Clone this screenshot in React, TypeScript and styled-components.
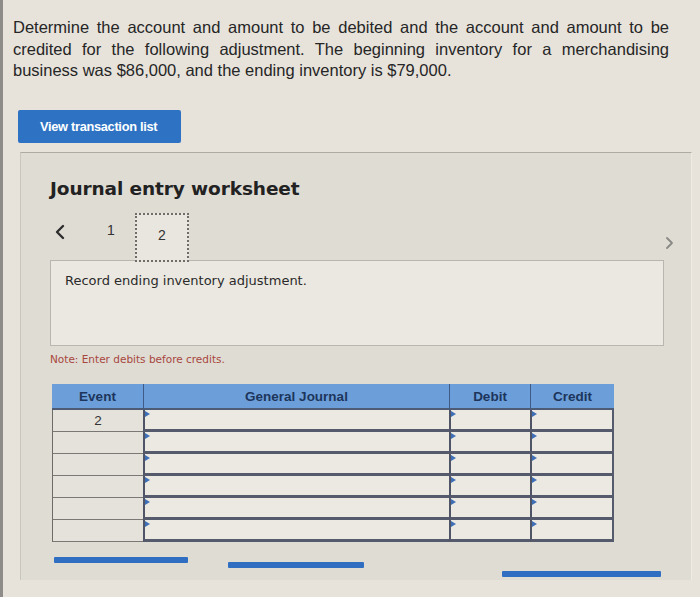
import React from "react";
import styled, { createGlobalStyle } from "styled-components";

const Global = createGlobalStyle`
  html, body { margin: 0; padding: 0; }
  body {
    background: #e7e3db;
    font-family: "Liberation Sans", Arial, sans-serif;
    color: #222;
    width: 700px;
    height: 597px;
    overflow: hidden;
  }
`;

const Page = styled.div`
  position: relative;
  width: 700px;
  height: 597px;
  border-left: 3px solid #8e8c88;
  box-sizing: border-box;
  padding-top: 17px;
`;

const Question = styled.div`
  margin-left: 10px;
  width: 656px;
  font-size: 16.5px;
  line-height: 21.5px;
  color: #262626;
`;

const Line = styled.span<{ $justify?: boolean }>`
  display: block;
  text-align: ${(p) => (p.$justify ? "justify" : "left")};
  text-align-last: ${(p) => (p.$justify ? "justify" : "left")};
`;

const ViewButton = styled.button`
  display: block;
  margin: 28px 0 0 15px;
  width: 163px;
  height: 33px;
  background: #2e73c3;
  border: none;
  border-radius: 2px;
  color: #fff;
  font-family: "Liberation Sans", Arial, sans-serif;
  font-weight: bold;
  font-size: 12.8px;
  letter-spacing: -0.3px;
  text-align: left;
  padding: 0 0 0 22px;
`;

const Panel = styled.section`
  margin: 9px 0 0 17px;
  width: 672px;
  height: 428px;
  background: #dfdcd4;
  border-top: 1px solid #aeaba4;
  border-left: 1px solid #c9c6bf;
  border-right: 1px solid #eeebe4;
  box-sizing: border-box;
  padding: 24px 0 0 29px;
  display: flex;
  flex-direction: column;
`;

const Title = styled.h2`
  margin: 0;
  font-family: "DejaVu Sans", Verdana, sans-serif;
  font-weight: bold;
  font-size: 18.5px;
  line-height: 24px;
  color: #222;
  letter-spacing: -0.1px;
`;

const TabsRow = styled.div`
  margin-top: 12px;
  width: 625px;
  height: 53px;
  display: flex;
  align-items: flex-start;
`;

const Chevron = styled.svg<{ $muted?: boolean }>`
  flex: none;
  stroke: ${(p) => (p.$muted ? "#8a8884" : "#2e2e2e")};
  fill: none;
  stroke-linecap: round;
  stroke-linejoin: round;
`;

const Prev = styled(Chevron)`
  margin: 11px 0 0 4px;
`;

const Next = styled(Chevron)`
  margin: 23px 0 0 auto;
`;

const Tab = styled.div<{ $active?: boolean }>`
  width: ${(p) => (p.$active ? "54px" : "40px")};
  height: ${(p) => (p.$active ? "49px" : "30px")};
  box-sizing: border-box;
  display: flex;
  align-items: center;
  justify-content: center;
  font-family: "Liberation Sans", Arial, sans-serif;
  font-size: 14px;
  color: #333;
  border: ${(p) => (p.$active ? "2px dotted #6f6d69" : "none")};
  background: ${(p) => (p.$active ? "#e9e6df" : "transparent")};
  position: relative;
  z-index: 1;
  margin-left: ${(p) => (p.$active ? "4px" : "25px")};
  padding-bottom: ${(p) => (p.$active ? "4px" : "0")};
  margin-top: ${(p) => (p.$active ? "0" : "2px")};
`;

const ContentBox = styled.div`
  width: 614px;
  height: 90px;
  box-sizing: border-box;
  margin-top: -2px;
  background: #ebe8e1;
  border: 1px solid #b9b6af;
  padding: 12px 14px;
  font-family: "DejaVu Sans", Verdana, sans-serif;
  font-size: 13px;
  color: #2a2a2a;
`;

const Note = styled.p`
  margin: 7px 0 0 0;
  font-family: "DejaVu Sans", Verdana, sans-serif;
  font-size: 10.5px;
  color: #a8473e;
`;

const Table = styled.div`
  margin: 19px 0 0 2px;
  width: 562px;
  display: grid;
  grid-template-columns: 91px 306px 81px 84px;
  grid-template-rows: 26px;
  grid-auto-rows: 22px;
`;

const Head = styled.div<{ $first?: boolean }>`
  background: #6c9fd9;
  display: flex;
  align-items: center;
  justify-content: center;
  font-weight: bold;
  font-size: 13.5px;
  color: #1d355c;
  border-left: ${(p) => (p.$first ? "none" : "1px solid #3f5c88")};
  border-bottom: 2px solid #4d5b74;
`;

const EventCell = styled.div`
  box-sizing: border-box;
  background: #e5e2db;
  border-left: 1px solid #6d6b68;
  border-bottom: 1px solid #7a7875;
  display: flex;
  align-items: center;
  justify-content: center;
  font-size: 13.5px;
  color: #333;
`;

const InputCell = styled.div<{ $right?: boolean }>`
  position: relative;
  box-sizing: border-box;
  background: #ece9e3;
  border-left: 2px solid #4f5466;
  border-bottom: 3px solid #555a6c;
  border-right: ${(p) => (p.$right ? "2px solid #555a6c" : "none")};
  &::before {
    content: "";
    position: absolute;
    left: 0;
    top: 1px;
    border-top: 3px solid transparent;
    border-bottom: 3px solid transparent;
    border-left: 5px solid #3e6fb6;
  }
`;

const Bars = styled.div`
  margin-top: 15px;
  display: flex;
  align-items: flex-start;
  height: 24px;
`;

const Bar = styled.div<{ $w: number; $gap: number; $dy: number }>`
  width: ${(p) => p.$w}px;
  height: 6px;
  background: #2f6ec0;
  margin-left: ${(p) => p.$gap}px;
  margin-top: ${(p) => p.$dy}px;
  border-radius: 1px;
`;

const rows = [0, 1, 2, 3, 4, 5];

export default function App() {
  return (
    <>
      <Global />
      <Page>
        <Question>
          <Line $justify>
            Determine the account and amount to be debited and the account and amount to be
          </Line>
          <Line $justify>
            credited for the following adjustment. The beginning inventory for a merchandising
          </Line>
          <Line>business was $86,000, and the ending inventory is $79,000.</Line>
        </Question>
        <ViewButton>View transaction list</ViewButton>
        <Panel>
          <Title>Journal entry worksheet</Title>
          <TabsRow>
            <Prev width="12" height="16" viewBox="0 0 12 16" strokeWidth="2.4">
              <path d="M9 2 L3 8 L9 14" />
            </Prev>
            <Tab>1</Tab>
            <Tab $active>2</Tab>
            <Next $muted width="10" height="14" viewBox="0 0 10 14" strokeWidth="1.8">
              <path d="M2 2 L7 7 L2 12" />
            </Next>
          </TabsRow>
          <ContentBox>Record ending inventory adjustment.</ContentBox>
          <Note>Note: Enter debits before credits.</Note>
          <Table>
            <Head $first>Event</Head>
            <Head>General Journal</Head>
            <Head>Debit</Head>
            <Head>Credit</Head>
            {rows.map((r) => (
              <React.Fragment key={r}>
                <EventCell>{r === 0 ? "2" : ""}</EventCell>
                <InputCell />
                <InputCell />
                <InputCell $right />
              </React.Fragment>
            ))}
          </Table>
          <Bars>
            <Bar $w={134} $gap={4} $dy={0} />
            <Bar $w={136} $gap={40} $dy={5} />
            <Bar $w={159} $gap={138} $dy={14} />
          </Bars>
        </Panel>
      </Page>
    </>
  );
}
